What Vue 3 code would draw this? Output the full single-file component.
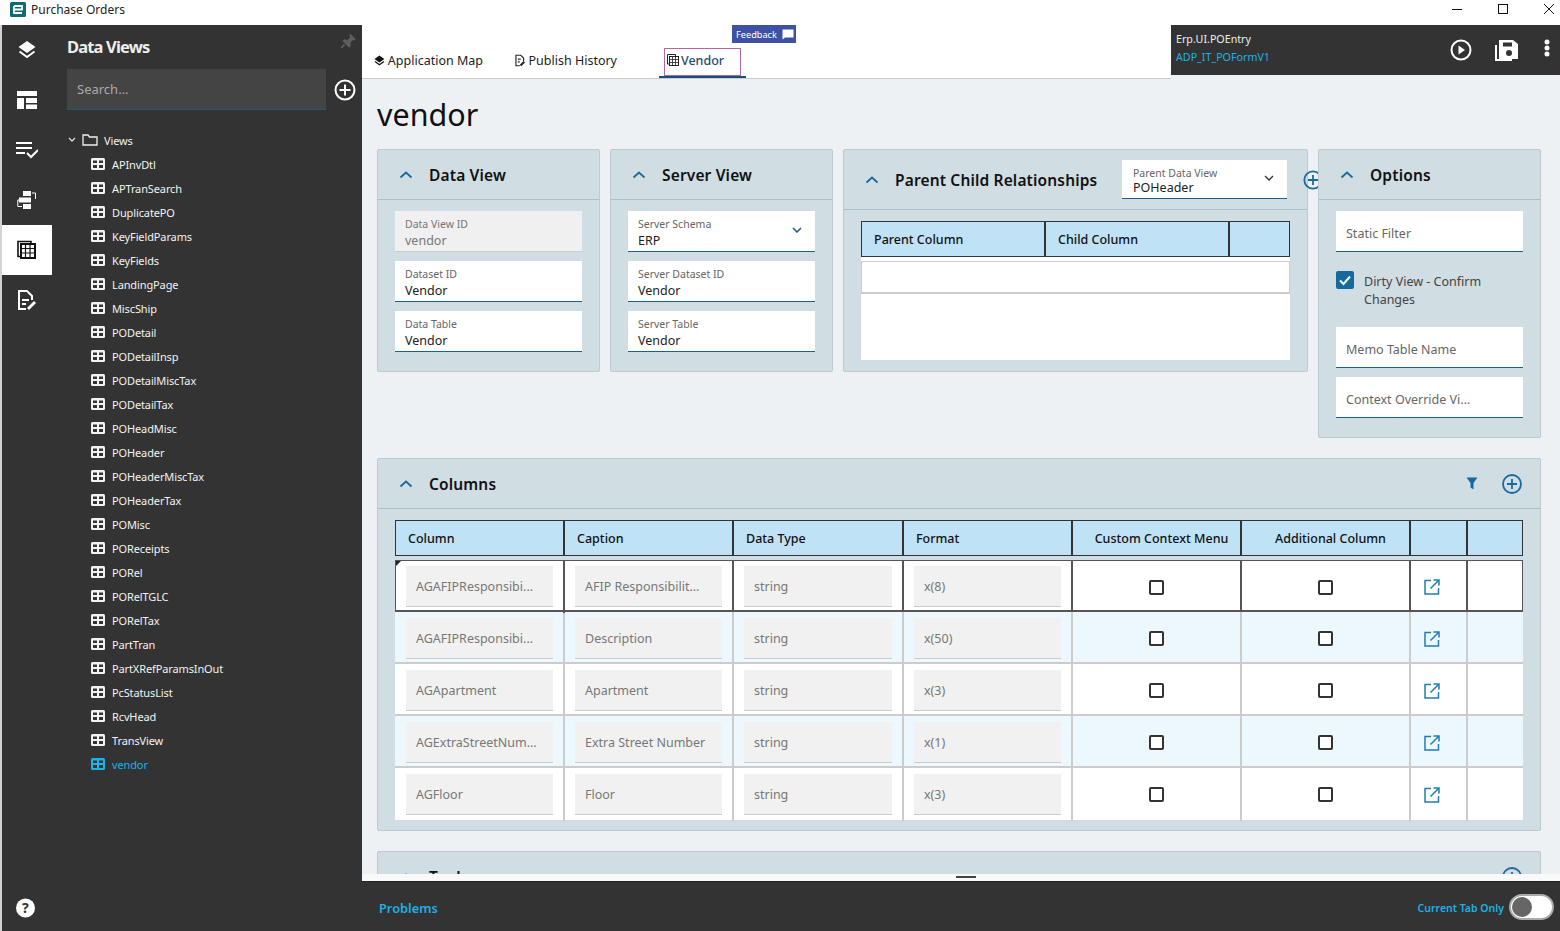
<script setup>
const views = ['APInvDtl','APTranSearch','DuplicatePO','KeyFieldParams','KeyFields','LandingPage','MiscShip','PODetail','PODetailInsp','PODetailMiscTax','PODetailTax','POHeadMisc','POHeader','POHeaderMiscTax','POHeaderTax','POMisc','POReceipts','PORel','PORelTGLC','PORelTax','PartTran','PartXRefParamsInOut','PcStatusList','RcvHead','TransView','vendor']
const heads = ['Column','Caption','Data Type','Format']
const rows = [
  ['AGAFIPResponsibi...','AFIP Responsibilit...','string','x(8)'],
  ['AGAFIPResponsibi...','Description','string','x(50)'],
  ['AGApartment','Apartment','string','x(3)'],
  ['AGExtraStreetNum...','Extra Street Number','string','x(1)'],
  ['AGFloor','Floor','string','x(3)'],
]
</script>

<template>
  <div class="app">
    <header class="titlebar">
      <div class="title-left">
        <svg class="logo" width="16" height="15" viewBox="0 0 16 15"><rect width="16" height="15" rx="1.5" fill="#0e6a78"/><path d="M4 4h8v3.500H4M4 4v7h8" fill="none" stroke="#fff" stroke-width="1.800"/></svg>
        <span>Purchase Orders</span>
      </div>
      <div class="winctl">
        <svg width="12" height="12" viewBox="0 0 12 12"><path d="M1 6.500h10" stroke="#111" fill="none"/></svg>
        <svg width="12" height="12" viewBox="0 0 12 12"><rect x="1.500" y="1.500" width="9" height="9" stroke="#111" fill="none"/></svg>
        <svg width="12" height="12" viewBox="0 0 12 12"><path d="M1 1l10 10M11 1L1 11" stroke="#111" fill="none"/></svg>
      </div>
    </header>

    <div class="body">
      <aside class="sidebar">
        <nav class="rail">
          <div class="rail-item"><svg width="22" height="22" viewBox="0 0 22 22"><path d="M11 2l8.500 6L11 14 2.500 8z" fill="#fff"/><path d="M3.500 12.500L11 18l7.500-5.500" fill="none" stroke="#fff" stroke-width="2"/></svg></div>
          <div class="rail-item"><svg width="20" height="20" viewBox="0 0 20 20" fill="#fff"><rect x="0" y="1" width="20" height="5"/><rect x="0" y="8" width="7" height="11"/><rect x="9" y="8" width="11" height="5"/><rect x="9" y="14.500" width="11" height="4.500"/></svg></div>
          <div class="rail-item"><svg width="22" height="18" viewBox="0 0 22 18" fill="none" stroke="#fff" stroke-width="2"><path d="M0 2h16M0 7h16M0 12h9"/><path d="M11 12l4 4 7-7"/></svg></div>
          <div class="rail-item"><svg width="20" height="20" viewBox="0 0 20 20"><g fill="#fff"><rect x="6" y="1" width="8" height="5"/><rect x="2" y="7.500" width="12" height="5"/><rect x="6" y="14" width="8" height="5"/></g><path d="M15 3h3.500v6M2 10H0.800v6.500H5" fill="none" stroke="#fff"/></svg></div>
          <div class="rail-item active"><svg width="20" height="20" viewBox="0 0 20 20" fill="none" stroke="#111"><path d="M3 16.500H1V1.500h13v2" stroke-width="1.600"/><rect x="4" y="4" width="14" height="14" stroke-width="2"/><path d="M4 8.500h14M4 13h14M8.500 4v14M13 4v14" stroke-width="1.200"/></svg></div>
          <div class="rail-item"><svg width="20" height="22" viewBox="0 0 20 22" fill="none" stroke="#fff" stroke-width="2"><path d="M9 20H2V2h8l5 5v4"/><path d="M5 11h7M5 15h4"/><path d="M10 19l7-7 2 2-7 7z" fill="#fff" stroke="none"/></svg></div>
          <div class="rail-spacer"></div>
          <svg class="help" width="19" height="20" viewBox="0 0 20 20"><circle cx="10" cy="10" r="10" fill="#fff"/><text x="10" y="15" text-anchor="middle" class="help-q">?</text></svg>
        </nav>
        <div class="views">
          <div class="views-head">
            <h2>Data Views</h2>
            <svg class="pin" width="18" height="18" viewBox="0 0 16 16"><path d="M9.500 1l5.500 5.500-1.500 1-1-.500-2.500 2.500.500 3-1.500 1.500-6-6L4.500 6.500l3 .500L10 4.500l-.500-1z" fill="#5e5e5e"/><path d="M5 11l-3 3" stroke="#5e5e5e" stroke-width="1.500"/></svg>
          </div>
          <div class="search-row">
            <div class="search">Search...</div>
            <svg width="22" height="22" viewBox="0 0 22 22" fill="none" stroke="#fff" stroke-width="2"><circle cx="11" cy="11" r="9.500"/><path d="M11 5.500v11M5.500 11h11"/></svg>
          </div>
          <div class="tree">
            <div class="tree-root">
              <svg width="8" height="6" viewBox="0 0 8 6" fill="none" stroke="#ddd" stroke-width="1.300"><path d="M1 1l3 3 3-3"/></svg>
              <svg width="16" height="12" viewBox="0 0 16 12" fill="none" stroke="#eee" stroke-width="1.300"><path d="M1 11V1h5l1.500 2H15v8z"/></svg>
              <span>Views</span>
            </div>
            <div v-for="v in views" :key="v" class="tree-item" :class="{ sel: v === 'vendor' }">
              <svg width="14" height="12" viewBox="0 0 14 12"><rect width="14" height="12" rx="1.500" fill="currentColor"/><g fill="#333"><rect x="2" y="2.500" width="4" height="2.500"/><rect x="8" y="2.500" width="4" height="2.500"/><rect x="2" y="7" width="4" height="3"/><rect x="8" y="7" width="4" height="3"/></g></svg>
              <span>{{ v }}</span>
            </div>
          </div>
        </div>
      </aside>

      <main class="main">
        <div class="top">
          <div class="tabs">
            <div class="tab t1"><svg width="11" height="11" viewBox="0 0 11 11"><path d="M5.500 0.500L10.500 4 5.500 7.500.500 4z" fill="#111"/><path d="M1 6.500l4.500 3.300L10 6.500" fill="none" stroke="#111" stroke-width="1.200"/></svg><span>Application Map</span></div>
            <div class="tab t2"><svg width="11" height="13" viewBox="0 0 11 13" fill="none" stroke="#222" stroke-width="1.200"><path d="M5 12H1V1h5l3 3v3"/><path d="M3 5h3M3 8h2"/><path d="M5 11l4-4 1.500 1.500-4 4z" fill="#222" stroke="none"/></svg><span>Publish History</span></div>
            <div class="tab t3">
              <div class="t3-box"><svg width="12" height="12" viewBox="0 0 12 12" fill="none" stroke="#222"><path d="M2 10H.500V.500h8V2"/><rect x="2.500" y="2.500" width="9" height="9"/><path d="M2.500 5.500h9M2.500 8.500h9M5.500 2.500v9M8.500 2.500v9" stroke-width=".800"/></svg><span>Vendor</span></div>
            </div>
            <div class="feedback">Feedback<svg width="12" height="11" viewBox="0 0 12 11"><path d="M.5 .5h11v8H3L.5 10.500z" fill="#fff"/></svg></div>
          </div>
          <div class="project">
            <div class="project-text">
              <div class="p1">Erp.UI.POEntry</div>
              <div class="p2">ADP_IT_POFormV1</div>
            </div>
            <svg class="pa" width="22" height="22" viewBox="0 0 22 22"><circle cx="11" cy="11" r="9.500" fill="none" stroke="#fff" stroke-width="2"/><path d="M8.500 6.500L15 11l-6.500 4.500z" fill="#fff"/></svg>
            <svg class="pb" width="24" height="24" viewBox="0 0 24 24"><path d="M1 7v15h16" fill="none" stroke="#fff" stroke-width="2"/><path d="M4 2h14l5 4v15H4z" fill="#fff"/><rect x="8" y="4.500" width="9" height="4" fill="#333"/><circle cx="14" cy="15" r="3" fill="#333"/></svg>
            <svg class="pc" width="6" height="18" viewBox="0 0 6 18" fill="#fff"><circle cx="3" cy="3" r="2.500"/><circle cx="3" cy="9" r="2.500"/><circle cx="3" cy="15" r="2.500"/></svg>
          </div>
        </div>

        <div class="content">
          <h1>vendor</h1>
          <div class="row-panels">
            <section class="panel p-small">
              <div class="p-head"><svg class="chev" width="14" height="8" viewBox="0 0 14 8"><path d="M1.500 6.500L7 1.500l5.500 5" fill="none" stroke="#1b6a9c" stroke-width="1.800"/></svg><span>Data View</span></div>
              <div class="p-body">
                <div class="field dis"><label>Data View ID</label><div>vendor</div></div>
                <div class="field"><label>Dataset ID</label><div>Vendor</div></div>
                <div class="field"><label>Data Table</label><div>Vendor</div></div>
              </div>
            </section>
            <section class="panel p-small">
              <div class="p-head"><svg class="chev" width="14" height="8" viewBox="0 0 14 8"><path d="M1.500 6.500L7 1.500l5.500 5" fill="none" stroke="#1b6a9c" stroke-width="1.800"/></svg><span>Server View</span></div>
              <div class="p-body">
                <div class="field"><label>Server Schema</label><div>ERP</div><svg class="drop" width="10" height="6" viewBox="0 0 10 6"><path d="M1 1l4 4 4-4" fill="none" stroke="#1b5a80" stroke-width="1.500"/></svg></div>
                <div class="field"><label>Server Dataset ID</label><div>Vendor</div></div>
                <div class="field"><label>Server Table</label><div>Vendor</div></div>
              </div>
            </section>
            <section class="panel p-parent">
              <div class="p-head tall">
                <svg class="chev" width="14" height="8" viewBox="0 0 14 8"><path d="M1.500 6.500L7 1.500l5.500 5" fill="none" stroke="#1b6a9c" stroke-width="1.800"/></svg><span>Parent Child Relationships</span>
                <div class="field head-sel"><label>Parent Data View</label><div>POHeader</div><svg class="drop" width="10" height="6" viewBox="0 0 10 6"><path d="M1 1l4 4 4-4" fill="none" stroke="#333" stroke-width="1.300"/></svg></div>
                <svg class="over-plus" width="20" height="20" viewBox="0 0 20 20" fill="none" stroke="#1b6a9c" stroke-width="1.800"><circle cx="10" cy="10" r="8.700"/><path d="M10 5v10M5 10h10"/></svg>
              </div>
              <div class="rel">
                <div class="rel-head"><div>Parent Column</div><div>Child Column</div><div></div></div>
                <div class="rel-row"></div>
              </div>
            </section>
            <section class="panel p-options">
              <div class="p-head"><svg class="chev" width="14" height="8" viewBox="0 0 14 8"><path d="M1.500 6.500L7 1.500l5.500 5" fill="none" stroke="#1b6a9c" stroke-width="1.800"/></svg><span>Options</span></div>
              <div class="p-body">
                <div class="field ph">Static Filter</div>
                <div class="chk-row">
                  <svg width="18" height="18" viewBox="0 0 18 18"><rect width="18" height="18" rx="2" fill="#146a9e"/><path d="M4 9.500l3.500 3.500L14 5.500" fill="none" stroke="#fff" stroke-width="2"/></svg>
                  <span>Dirty View - Confirm Changes</span>
                </div>
                <div class="field ph">Memo Table Name</div>
                <div class="field ph">Context Override Vi...</div>
              </div>
            </section>
          </div>

          <section class="panel p-columns">
            <div class="p-head">
              <svg class="chev" width="14" height="8" viewBox="0 0 14 8"><path d="M1.500 6.500L7 1.500l5.500 5" fill="none" stroke="#1b6a9c" stroke-width="1.800"/></svg><span>Columns</span>
              <svg class="filter" width="12" height="13" viewBox="0 0 12 13"><path d="M.5 .5h11L7.500 6v6.500l-3-2V6z" fill="#146a9e"/></svg>
              <svg class="plus" width="20" height="20" viewBox="0 0 20 20" fill="none" stroke="#1b6a9c" stroke-width="1.800"><circle cx="10" cy="10" r="9"/><path d="M10 5v10M5 10h10"/></svg>
            </div>
            <div class="grid-wrap">
              <div class="g-head">
                <div v-for="h in heads" :key="h">{{ h }}</div>
                <div class="c">Custom Context Menu</div>
                <div class="c">Additional Column</div>
                <div></div><div></div>
              </div>
              <div v-for="(r, i) in rows" :key="i" class="g-row" :class="{ first: i === 0, alt: i % 2 === 1, last: i === rows.length - 1 }">
                <div v-for="(c, j) in r" :key="j" class="cell"><div class="inp">{{ c }}</div></div>
                <div class="cell center"><span class="box"></span></div>
                <div class="cell center"><span class="box"></span></div>
                <div class="cell link"><svg width="16" height="16" viewBox="0 0 16 16" fill="none" stroke="#1d7fb5" stroke-width="1.500"><path d="M7 1.500H1v13.500h13.500V9"/><path d="M6.500 9.500L14.500 1.500M9.500 1h5.500v5.500"/></svg></div>
                <div class="cell"></div>
              </div>
            </div>
          </section>

          <section class="panel p-tools">
            <div class="p-head">
              <svg class="chev" width="14" height="8" viewBox="0 0 14 8"><path d="M1.500 6.500L7 1.500l5.500 5" fill="none" stroke="#1b6a9c" stroke-width="1.800"/></svg><span>Tools</span>
              <svg class="plus" width="20" height="20" viewBox="0 0 20 20" fill="none" stroke="#1b6a9c" stroke-width="1.800"><circle cx="10" cy="10" r="9"/><path d="M10 5v10M5 10h10"/></svg>
            </div>
          </section>
        </div>

        <div class="splitter"><i></i></div>
        <footer class="problems">
          <span class="prob">Problems</span>
          <span class="cto">Current Tab Only</span>
          <span class="toggle"><i></i></span>
        </footer>
      </main>
    </div>
  </div>
</template>

<style>
html, body { margin: 0; background: #fff; }
</style>

<style scoped>
.app { width: 1560px; height: 931px; display: flex; flex-direction: column; overflow: hidden; font-family: "Noto Sans", sans-serif; background: #fff; color: #111; }
.titlebar { height: 25px; display: flex; align-items: flex-start; justify-content: space-between; flex: none; }
.title-left { display: flex; align-items: center; gap: 5px; padding-left: 10px; font-size: 12px; color: #222; height: 19px; }
.winctl { display: flex; gap: 34px; padding-right: 5px; margin-top: 3px; }
.body { flex: 1; display: flex; min-height: 0; }
.sidebar { width: 360px; margin-left: 2px; background: #333; display: flex; flex: none; box-shadow: -2px 0 0 #cfd4d6; }
.rail { width: 50px; display: flex; flex-direction: column; align-items: center; padding-bottom: 13px; flex: none; }
.rail-item { width: 50px; height: 50px; display: flex; align-items: center; justify-content: center; flex: none; }
.rail-item.active { background: #fff; }
.rail-spacer { flex: 1; }
.help { margin-left: -4px; }
.help-q { font: 700 15px "Noto Sans", sans-serif; fill: #333; }
.views { flex: 1; padding-left: 15px; min-width: 0; }
.views-head { height: 44px; display: flex; align-items: center; justify-content: space-between; padding-right: 5px; }
.views-head h2 { margin: -2px 0 0; font: 700 16.500px "Noto Sans", sans-serif; letter-spacing: -0.85px; color: #eee; }
.pin { margin-top: -12px; }
.search-row { display: flex; align-items: center; gap: 8px; }
.search { width: 259px; height: 40px; background: #444; border-bottom: 1px solid #1e5a78; color: #aaa; font-size: 13px; line-height: 40px; text-indent: 10px; }
.tree { margin-top: 18px; font-size: 11px; letter-spacing: -0.12px; color: #f2f2f2; }
.tree-root { display: flex; align-items: center; height: 24px; }
.tree-root svg:first-child { margin-left: 1px; margin-right: 6px; }
.tree-root span { margin-left: 6px; }
.tree-item { display: flex; align-items: center; height: 24px; padding-left: 24px; gap: 7px; color: #f2f2f2; }
.tree-item.sel { color: #18b4ea; }

.main { flex: 1; min-width: 0; display: flex; flex-direction: column; background: #edf1f4; }
.top { display: flex; height: 54px; flex: none; align-items: flex-start; }
.tabs { width: 809px; height: 53px; background: #fff; border-bottom: 1px solid #ccc; position: relative; display: flex; flex: none; }
.tab { display: flex; align-items: center; gap: 3px; font-size: 12.500px; color: #222; height: 24px; margin-top: 23px; white-space: nowrap; flex: none; }
.t1 { margin-left: 12px; width: 109px; }
.t2 { margin-left: 32px; width: 102px; }
.t3 { margin-left: 42px; width: 87px; height: 30px; border-bottom: 2px solid #174f78; padding-left: 5px; box-sizing: border-box; align-items: stretch; }
.t3-box { width: 77px; box-sizing: border-box; border: 1px solid #b5689f; padding: 0 0 4px 2px; display: flex; align-items: center; gap: 2px; color: #1f4d70; font-weight: 500; height: 28px; }
.feedback { position: absolute; left: 370px; top: 0; width: 64px; height: 18px; box-sizing: border-box; background: #3f51a5; color: #fff; font-size: 9.200px; display: flex; align-items: center; gap: 5px; padding-left: 4px; }
.project { width: 389px; height: 50px; background: #333; display: flex; align-items: center; flex: none; }
.project-text { padding: 0 0 4px 5px; font-size: 10.700px; line-height: 18px; flex: 1; }
.p1 { color: #eee; }
.p2 { color: #1ab2e6; }
.pa { margin-right: 23px; }
.pb { margin-right: 25px; }
.pc { margin-right: 10px; margin-top: -4px; }

.content { flex: 1; min-height: 0; overflow: hidden; padding: 0 19px 0 15px; }
.content h1 { margin: 0; height: 70px; line-height: 71px; font-size: 30.500px; font-weight: 400; color: #111; }
.row-panels { display: flex; gap: 10px; align-items: flex-start; }
.panel { background: #d0dde2; border: 1px solid #bccbd1; box-sizing: border-box; border-radius: 2px; flex: none; position: relative; }
.p-small { width: 223px; height: 223px; }
.p-parent { width: 465px; height: 223px; }
.p-options { width: 223px; height: 289px; z-index: 1; }
.p-head { height: 50px; box-sizing: border-box; border-bottom: 1px solid #a5c3cf; display: flex; align-items: center; padding-left: 21px; font-size: 15.500px; font-weight: 600; letter-spacing: 0.15px; position: relative; color: #111; }
.p-head.tall { height: 60px; }
.chev { margin-right: 16px; flex: none; }
.p-body { padding: 11px 17px 0; display: flex; flex-direction: column; gap: 9px; }
.field { height: 41px; box-sizing: border-box; background: #fff; border-bottom: 1px solid #1b5f8c; padding: 6px 10px 0; font-size: 12.500px; line-height: 16px; letter-spacing: 0; color: #222; position: relative; }
.field label { display: block; font-size: 10.500px; line-height: 15px; margin-bottom: 1px; color: #666; }
.field.dis { background: #f0f0f0; border-bottom-color: #ccc; color: #777; }
.field.dis label { color: #777; }
.drop { position: absolute; right: 13px; top: 16px; }
.head-sel { position: absolute; left: 278px; top: 10px; width: 165px; height: 39px; padding: 6px 11px 0; font-weight: 400; }
.head-sel label { line-height: 14px; margin-bottom: 0; }
.head-sel .drop { top: 15px; }
.over-plus { position: absolute; left: 459px; top: 20px; }
.rel { margin: 11px 17px 0; width: 429px; height: 139px; background: #fff; }
.rel-head { display: grid; grid-template-columns: 184px 184px 59px; height: 36px; background: #bfe2f6; box-sizing: border-box; border: 1px solid #333; font-size: 12.500px; font-weight: 500; }
.rel-head > div { display: flex; align-items: center; padding-left: 12px; box-sizing: border-box; border-right: 2px solid #333; }
.rel-head > div:last-child { border-right: 0; }
.rel-row { margin-top: 4px; height: 33px; box-sizing: border-box; border: 1px solid #ccc; border-bottom-width: 2px; }
.ph { padding-top: 0; line-height: 45px; color: #666; }
.chk-row { display: flex; gap: 10px; font-size: 12.500px; line-height: 18px; color: #444; margin: 10px 0 8px; height: 39px; }
.chk-row span { padding-top: 2px; }
.chk-row svg { flex: none; }
.p-columns { width: 1164px; height: 373px; margin-top: 20px; }
.filter { position: absolute; left: 1088px; top: 18px; }
.plus { position: absolute; left: 1124px; top: 15px; }
.grid-wrap { margin: 11px 17px 0; width: 1128px; }
.g-head { display: grid; grid-template-columns: 169px 169px 170px 169px 169px 169px 57px 54px; height: 36px; box-sizing: border-box; background: #bfe2f6; border: 1px solid #333; font-size: 12.500px; font-weight: 500; margin-bottom: 4px; }
.g-head > div { display: flex; align-items: center; padding-left: 12px; border-right: 2px solid #333; box-sizing: border-box; }
.g-head > div:last-child { border-right: 0; }
.g-head > .c { justify-content: center; padding: 0 0 0 10px; }
.g-row { display: grid; grid-template-columns: 170px 169px 170px 169px 169px 169px 57px 55px; height: 52px; box-sizing: border-box; background: #fff; border-bottom: 2px solid #ccc; }
.g-row.alt { background: #ecf7fe; }
.g-row.last { border-bottom: 0; }
.g-row.first { grid-template-columns: 169px 169px 170px 169px 169px 169px 57px 54px; border: 1px solid #555; border-bottom-width: 2px; }
.cell { border-right: 2px solid #ccc; box-sizing: border-box; padding: 6px 10px; min-width: 0; }
.cell:first-child { padding-left: 11px; }
.cell:last-child { border-right: 0; }
.first .cell { border-right-color: #555; padding-top: 5px; }
.first .cell:first-child { padding-left: 10px; position: relative; }
.first .cell:first-child::before { content: ""; position: absolute; left: 0; top: 0; border-style: solid; border-width: 5px 5px 0 0; border-color: #222 transparent transparent transparent; }
.inp { height: 41px; box-sizing: border-box; background: #f1f1f1; border-bottom: 1px solid #ccc; padding: 0 10px; font-size: 12.500px; line-height: 42px; color: #777; white-space: nowrap; }
.cell.center { display: flex; align-items: center; justify-content: center; padding: 0; }
.first .cell.center { padding: 1px 0 0; }
.box { width: 15px; height: 15px; box-sizing: border-box; border: 2px solid #333; border-radius: 2px; background: #fff; }
.cell.link { display: flex; align-items: center; padding: 0 0 0 13px; }
.first .cell.link { padding: 0 0 0 13px; }
.p-tools { width: 1164px; height: 60px; margin-top: 20px; }
.splitter { height: 7px; background: #f9f9f9; flex: none; display: flex; justify-content: center; align-items: flex-start; padding-top: 2px; box-sizing: border-box; }
.splitter i { width: 20px; height: 2px; background: #444; margin-left: 9px; }
.problems { height: 50px; flex: none; background: #333; border-top: 1px solid #222; box-sizing: border-box; display: flex; align-items: center; padding: 2px 6px 0 17px; }
.prob { color: #1ab2e6; font-size: 12.800px; font-weight: 600; flex: 1; }
.cto { color: #1ab2e6; font-size: 10.500px; font-weight: 600; margin-right: 5px; }
.toggle { width: 45px; height: 26px; box-sizing: border-box; background: #fff; border: 2px solid #aaa; border-radius: 13px; display: flex; align-items: center; padding-left: 1px; margin-top: -1px; }
.toggle i { width: 20px; height: 20px; border-radius: 50%; background: #666; }
</style>
